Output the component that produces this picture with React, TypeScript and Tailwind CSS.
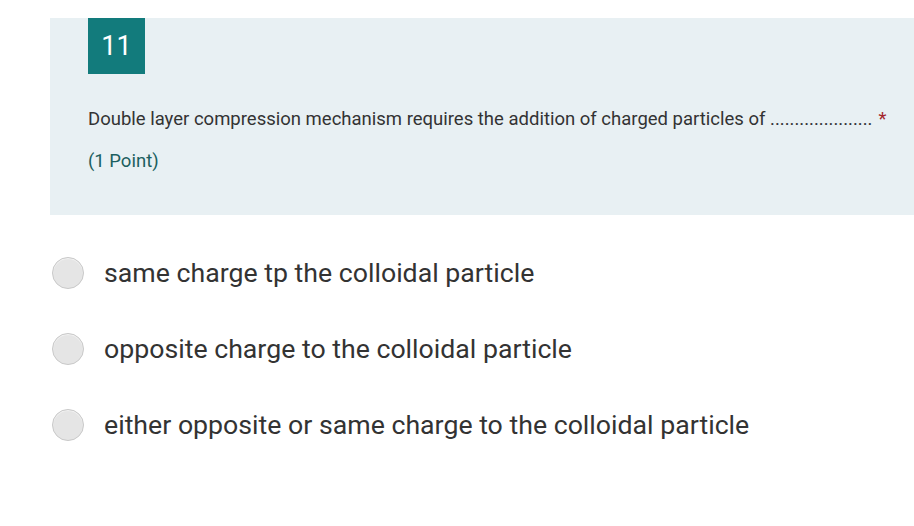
import React from "react";

const options = [
  "same charge tp the colloidal particle",
  "opposite charge to the colloidal particle",
  "either opposite or same charge to the colloidal particle",
];

const App = () => {
  return (
    <div className="w-[914px] h-[526px] bg-white overflow-hidden pt-[18px] font-['Roboto',sans-serif]">
      {/* Question card */}
      <div className="ml-[50px] h-[197px] bg-[#e8f0f3] pl-[38px]">
        <div className="flex items-center justify-center w-[57px] h-[56px] bg-[#127b7c] text-white text-[27px]">
          11
        </div>
        <div className="flex items-start mt-[33px] text-[18.5px] text-[#333] leading-[24px]">
          <span>
            Double layer compression mechanism requires the addition of charged particles of .....................
          </span>
          <span className="ml-[6px] text-[#a4262c]">*</span>
        </div>
        <div className="mt-[18px] text-[18.5px] leading-[24px] text-[#1c5f60]">(1 Point)</div>
      </div>

      {/* Options */}
      <div className="flex flex-col gap-[44px] mt-[42px] pl-[52px]">
        {options.map((opt) => (
          <label key={opt} className="flex items-center h-[32px]">
            <span className="w-[32px] h-[32px] rounded-full bg-[#e5e5e5] border border-[#c9c9c9] shadow-[inset_0_1px_1px_rgba(255,255,255,0.6)]" />
            <span className="ml-[20px] text-[26.7px] text-[#333]">{opt}</span>
          </label>
        ))}
      </div>
    </div>
  );
};

export default App;
